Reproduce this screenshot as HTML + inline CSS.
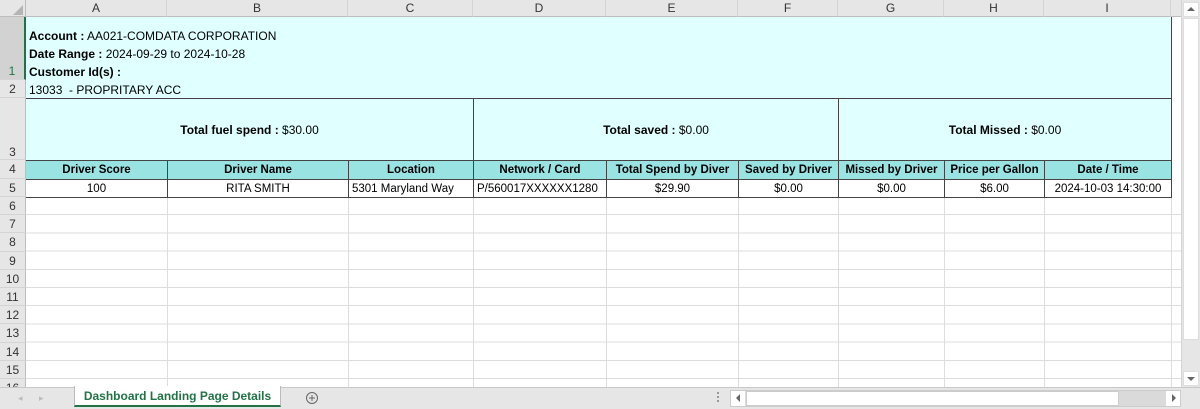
<!DOCTYPE html>
<html><head><meta charset="utf-8"><style>
*{margin:0;padding:0;box-sizing:border-box}
body{width:1200px;height:409px;overflow:hidden;background:#fff;font-family:"Liberation Sans",sans-serif;font-size:11.5px;color:#000;position:relative}
.a{position:absolute}
.ch{top:0;height:17px;background:#e6e6e6;border-right:1px solid #d4d4d4;border-bottom:1px solid #bdbdbd;text-align:center;line-height:17px;color:#333;font-size:12px}
.rh{left:0;width:26px;background:#e6e6e6;border-bottom:1px solid #d4d4d4;border-right:1px solid #bdbdbd;text-align:center;color:#333;font-size:12px}
.c{display:flex;align-items:center;justify-content:center;white-space:nowrap;overflow:hidden}
.b{font-weight:bold}
.vl{top:197px;height:190px;width:1px;background:#dcdcdc}
.k{position:absolute;background:#444}
</style></head><body>
<div class="a" style="left:0;top:0;width:26px;height:17px;background:#e6e6e6;border-right:1px solid #bdbdbd;border-bottom:1px solid #bdbdbd"></div>
<svg class="a" style="left:12px;top:4px" width="12" height="12"><polygon points="11,1 11,11 1,11" fill="#b4b4b4"/></svg>
<div class="a ch" style="left:26px;width:141px">A</div>
<div class="a ch" style="left:167px;width:181px">B</div>
<div class="a ch" style="left:348px;width:125px">C</div>
<div class="a ch" style="left:473px;width:133px">D</div>
<div class="a ch" style="left:606px;width:132px">E</div>
<div class="a ch" style="left:738px;width:100px">F</div>
<div class="a ch" style="left:838px;width:106px">G</div>
<div class="a ch" style="left:944px;width:100px">H</div>
<div class="a ch" style="left:1044px;width:127px">I</div>
<div class="a ch" style="left:1171px;width:11px;border-right:none"></div>

<div class="a" style="left:26px;top:197px;width:1155px;height:190px;background:repeating-linear-gradient(to bottom,#fff 0,#fff 17.2px,#dcdcdc 17.2px,#dcdcdc 18.2px)"></div>
<div class="a vl" style="left:167px"></div><div class="a vl" style="left:348px"></div><div class="a vl" style="left:473px"></div><div class="a vl" style="left:606px"></div><div class="a vl" style="left:738px"></div><div class="a vl" style="left:838px"></div><div class="a vl" style="left:944px"></div><div class="a vl" style="left:1044px"></div><div class="a vl" style="left:1171px"></div>

<div class="a rh" style="top:17px;height:63px;line-height:108px;color:#217346;border-right:2px solid #217346;background:#d2d2d2">1</div>
<div class="a rh" style="top:80px;height:18px;line-height:18px">2</div>
<div class="a rh" style="top:98px;height:62px;line-height:108px">3</div>
<div class="a rh" style="top:160px;height:19px;line-height:19px">4</div>
<div class="a rh" style="top:179px;height:18px;line-height:18px">5</div>
<div class="a rh" style="top:197px;height:18.2px;line-height:18px">6</div>
<div class="a rh" style="top:215.2px;height:18.2px;line-height:18px">7</div>
<div class="a rh" style="top:233.4px;height:18.2px;line-height:18px">8</div>
<div class="a rh" style="top:251.6px;height:18.2px;line-height:18px">9</div>
<div class="a rh" style="top:269.8px;height:18.2px;line-height:18px">10</div>
<div class="a rh" style="top:288px;height:18.2px;line-height:18px">11</div>
<div class="a rh" style="top:306.2px;height:18.2px;line-height:18px">12</div>
<div class="a rh" style="top:324.4px;height:18.2px;line-height:18px">13</div>
<div class="a rh" style="top:342.6px;height:18.2px;line-height:18px">14</div>
<div class="a rh" style="top:360.8px;height:18.2px;line-height:18px">15</div>
<div class="a rh" style="top:379px;height:8px;line-height:18px;overflow:hidden;border-bottom:none">16</div>

<div class="a" style="left:26px;top:17px;width:1146px;height:144px;background:#e0ffff"></div>
<div class="a" style="left:29px;top:27px;line-height:18px;font-size:12px">
<div><b>Account :</b> AA021-COMDATA CORPORATION</div>
<div><b>Date Range :</b> 2024-09-29 to 2024-10-28</div>
<div><b>Customer Id(s) :</b></div>
<div>13033&nbsp; - PROPRITARY ACC</div>
</div>
<div class="a c" style="left:26px;top:99px;width:447px;height:61px;font-size:12px"><b>Total fuel spend :</b>&nbsp;$30.00</div>
<div class="a c" style="left:474px;top:99px;width:364px;height:61px;font-size:12px"><b>Total saved :</b>&nbsp;$0.00</div>
<div class="a c" style="left:839px;top:99px;width:332px;height:61px;font-size:12px"><b>Total Missed :</b>&nbsp;$0.00</div>

<div class="a c b" style="left:26px;top:160px;width:1146px;height:19px;background:#99e3e3"></div>
<div class="a c b" style="left:26px;top:160px;width:141px;height:19px">Driver Score</div>
<div class="a c b" style="left:168px;top:160px;width:180px;height:19px">Driver Name</div>
<div class="a c b" style="left:349px;top:160px;width:124px;height:19px">Location</div>
<div class="a c b" style="left:474px;top:160px;width:132px;height:19px">Network / Card</div>
<div class="a c b" style="left:607px;top:160px;width:131px;height:19px">Total Spend by Diver</div>
<div class="a c b" style="left:739px;top:160px;width:99px;height:19px">Saved by Driver</div>
<div class="a c b" style="left:839px;top:160px;width:105px;height:19px">Missed by Driver</div>
<div class="a c b" style="left:945px;top:160px;width:99px;height:19px">Price per Gallon</div>
<div class="a c b" style="left:1045px;top:160px;width:126px;height:19px">Date / Time</div>

<div class="a c" style="left:26px;top:180px;width:141px;height:17px">100</div>
<div class="a c" style="left:168px;top:180px;width:180px;height:17px">RITA SMITH</div>
<div class="a c" style="left:349px;top:180px;width:124px;height:17px;justify-content:flex-start;padding-left:3px">5301 Maryland Way</div>
<div class="a c" style="left:474px;top:180px;width:132px;height:17px;justify-content:flex-start;padding-left:3px">P/560017XXXXXX1280</div>
<div class="a c" style="left:607px;top:180px;width:131px;height:17px">$29.90</div>
<div class="a c" style="left:739px;top:180px;width:99px;height:17px">$0.00</div>
<div class="a c" style="left:839px;top:180px;width:105px;height:17px">$0.00</div>
<div class="a c" style="left:945px;top:180px;width:99px;height:17px">$6.00</div>
<div class="a c" style="left:1045px;top:180px;width:126px;height:17px">2024-10-03 14:30:00</div>

<!-- dark borders -->
<div class="k" style="left:26px;top:98px;width:1146px;height:1px"></div>
<div class="k" style="left:26px;top:160px;width:1146px;height:1px"></div>
<div class="k" style="left:26px;top:179px;width:1146px;height:1px"></div>
<div class="k" style="left:26px;top:197px;width:1146px;height:1px"></div>
<div class="k" style="left:1171px;top:17px;width:1px;height:181px"></div>
<div class="k" style="left:473px;top:98px;width:1px;height:100px"></div>
<div class="k" style="left:838px;top:98px;width:1px;height:100px"></div>
<div class="k" style="left:167px;top:160px;width:1px;height:38px"></div>
<div class="k" style="left:348px;top:160px;width:1px;height:38px"></div>
<div class="k" style="left:606px;top:160px;width:1px;height:38px"></div>
<div class="k" style="left:738px;top:160px;width:1px;height:38px"></div>
<div class="k" style="left:944px;top:160px;width:1px;height:38px"></div>
<div class="k" style="left:1044px;top:160px;width:1px;height:38px"></div>

<div class="a" style="left:1181px;top:0;width:19px;height:387px;background:#e6e6e6;border-left:1px solid #d4d4d4"></div>
<div class="a" style="left:1183px;top:2px;width:16px;height:15px;background:#fff;border:1px solid #ddd"></div>
<svg class="a" style="left:1186px;top:6px" width="10" height="6"><polygon points="1,5 5,1 9,5" fill="#666"/></svg>
<div class="a" style="left:1183px;top:18px;width:16px;height:322px;background:#fff;border:1px solid #ddd"></div>
<div class="a" style="left:1183px;top:371px;width:16px;height:15px;background:#fff;border:1px solid #ddd"></div>
<svg class="a" style="left:1186px;top:376px" width="10" height="6"><polygon points="1,1 9,1 5,5" fill="#666"/></svg>

<div class="a" style="left:0;top:387px;width:1200px;height:22px;background:#e6e6e6;border-top:1px solid #c8c8c8"></div>
<div class="a" style="left:18px;top:393px;color:#bbb;font-size:9px">◂</div>
<div class="a" style="left:39px;top:393px;color:#bbb;font-size:9px">▸</div>
<div class="a" style="left:74px;top:386px;width:207px;height:21px;background:#fff;border-left:1px solid #bbb;border-right:1px solid #bbb;border-bottom:2px solid #217346;color:#217346;font-weight:bold;font-size:12px;text-align:center;line-height:21px">Dashboard Landing Page Details</div>
<svg class="a" style="left:305px;top:391px" width="14" height="14"><circle cx="7" cy="7" r="5.5" fill="none" stroke="#666" stroke-width="1"/><path d="M7 4v6M4 7h6" stroke="#666" stroke-width="1"/></svg>
<div class="a" style="left:717px;top:392px;width:2px;height:12px;background:repeating-linear-gradient(to bottom,#999 0,#999 2px,transparent 2px,transparent 4px)"></div>
<div class="a" style="left:730px;top:390px;width:451px;height:17px;background:#dadada;border:1px solid #ccc"></div>
<div class="a" style="left:731px;top:391px;width:14px;height:15px;background:#fff"></div>
<svg class="a" style="left:735px;top:394px" width="6" height="9"><polygon points="5,0 5,8 1,4" fill="#666"/></svg>
<div class="a" style="left:746px;top:391px;width:373px;height:15px;background:#fff;border:1px solid #ccc"></div>
<div class="a" style="left:1166px;top:391px;width:14px;height:15px;background:#fff"></div>
<svg class="a" style="left:1171px;top:394px" width="6" height="9"><polygon points="1,0 1,8 5,4" fill="#666"/></svg>
</body></html>
